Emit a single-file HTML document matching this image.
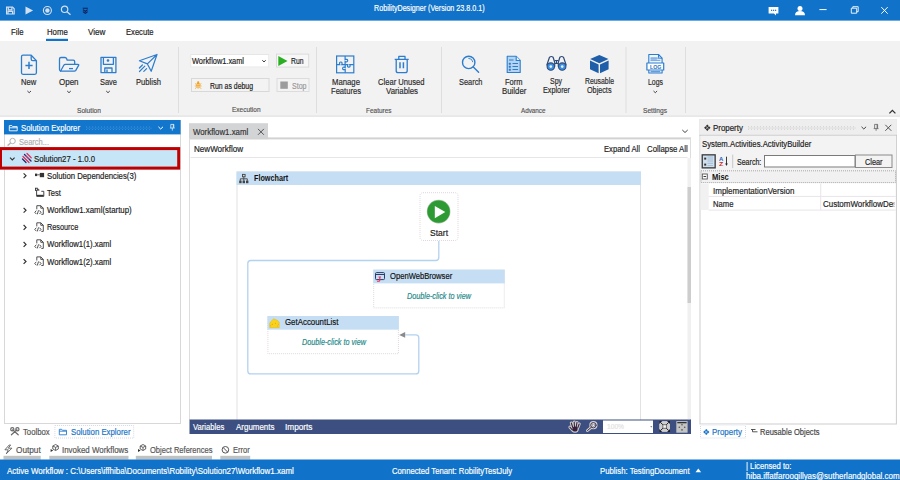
<!DOCTYPE html><html><head><meta charset="utf-8"><title>RobilityDesigner</title><style>
html,body{margin:0;padding:0;}body{width:900px;height:480px;overflow:hidden;position:relative;background:#fff;font-family:"Liberation Sans", sans-serif;}
.r{position:absolute;box-sizing:border-box;}
.t{position:absolute;white-space:nowrap;line-height:12px;height:12px;transform-origin:0 50%;-webkit-text-stroke:0.18px currentColor;}
svg{position:absolute;left:0;top:0;}
</style></head><body>
<svg width="900" height="480" viewBox="0 0 900 480">
<rect x="0" y="0" width="900" height="20.6" fill="#1072c8"/>
<rect x="46" y="38.8" width="22" height="2.2" fill="#1072c8"/>
<rect x="0" y="41" width="900" height="75.6" fill="#f2f2f3"/><rect x="0" y="115.6" width="900" height="1" fill="#dedede"/>
<rect x="178" y="47" width="1" height="66" fill="#dedede"/>
<rect x="316" y="47" width="1" height="66" fill="#dedede"/>
<rect x="441" y="47" width="1" height="66" fill="#dedede"/>
<rect x="625.5" y="47" width="1" height="66" fill="#dedede"/>
<rect x="685" y="47" width="1" height="66" fill="#dedede"/>
<rect x="190.3" y="54" width="79" height="13.5" fill="#fff"/><rect x="190.8" y="54.5" width="78" height="12.5" fill="none" stroke="#e6e6e6" stroke-width="1"/>
<rect x="276" y="53.6" width="33.2" height="14" fill="#f7f7f7"/><rect x="276.5" y="54.1" width="32.2" height="13" fill="none" stroke="#dadada" stroke-width="1"/>
<rect x="191" y="78" width="78.5" height="14" fill="#f3f3f3"/><rect x="191.5" y="78.5" width="77.5" height="13" fill="none" stroke="#d8d8d8" stroke-width="1"/>
<rect x="276.5" y="78" width="33" height="14" fill="#f3f3f3"/><rect x="277" y="78.5" width="32" height="13" fill="none" stroke="#dcdcdc" stroke-width="1"/>
<rect x="4" y="120" width="177" height="304" fill="#fff"/><rect x="4.5" y="120.5" width="176" height="303" fill="none" stroke="#d8d8d8" stroke-width="1"/>
<rect x="4" y="120" width="176.6" height="14.4" fill="#1176cc"/>
<rect x="-1" y="147.1" width="181.2" height="22.5" fill="#c6e6f7"/><rect x="0.5" y="148.6" width="178.2" height="19.5" fill="none" stroke="#c00000" stroke-width="3"/>
<rect x="54.4" y="425" width="79.8" height="13.5" fill="#fff"/><rect x="54.9" y="425.5" width="78.8" height="12.5" fill="none" stroke="#d4d9e2" stroke-width="1" stroke-dasharray="1 1"/>
<rect x="3.5" y="455.8" width="37.2" height="3.8" fill="#c0c2c2"/>
<rect x="49.3" y="455.8" width="79.2" height="3.8" fill="#c0c2c2"/>
<rect x="135.8" y="455.8" width="76.2" height="3.8" fill="#c0c2c2"/>
<rect x="220.3" y="455.8" width="29.9" height="3.8" fill="#c0c2c2"/>
<rect x="0" y="459.5" width="900" height="21" fill="#1072c8"/>
<rect x="189" y="123.2" width="79" height="16" fill="#d3d4d5"/>
<rect x="189" y="137.4" width="502" height="2" fill="#d2d2d2"/>
<rect x="189" y="138" width="1" height="282" fill="#dddddd"/>
<rect x="690" y="138" width="1" height="282" fill="#dddddd"/>
<rect x="190.5" y="157" width="497" height="1" fill="#e6e6e6"/>
<rect x="687.5" y="158" width="3.5" height="261" fill="#f0f0f0"/>
<rect x="687.5" y="187" width="3.5" height="116" fill="#cdcdcd"/>
<rect x="236.5" y="171.5" width="404.5" height="250" fill="#fff"/><rect x="237" y="172" width="403.5" height="249" fill="none" stroke="#e2e2e2" stroke-width="1"/>
<rect x="236.5" y="171.5" width="404.5" height="13.5" fill="#c6def3"/>
<rect x="419.5" y="192.2" width="39" height="48.8" fill="#fff" rx="3"/><rect x="420" y="192.7" width="38" height="47.8" fill="none" stroke="#e0d6de" stroke-width="1" stroke-dasharray="1 1" rx="3"/>
<rect x="373.2" y="269.6" width="131.6" height="38.8" fill="#fff"/><rect x="373.7" y="270.1" width="130.6" height="37.8" fill="none" stroke="#e0d8de" stroke-width="1" stroke-dasharray="1 1"/>
<rect x="373.2" y="269.6" width="131.6" height="13.8" fill="#c6def3"/>
<rect x="267.4" y="316" width="131.5" height="38.2" fill="#fff"/><rect x="267.9" y="316.5" width="130.5" height="37.2" fill="none" stroke="#e0d8de" stroke-width="1" stroke-dasharray="1 1"/>
<rect x="267.4" y="316" width="131.5" height="13.7" fill="#c6def3"/>
<rect x="189.5" y="419.5" width="501.5" height="14.5" fill="#3c4f80"/>
<rect x="603" y="420.5" width="50" height="12.5" fill="#fff"/>
<rect x="659.2" y="421.1" width="10.8" height="10.8" fill="#cfcfcf"/>
<rect x="676.3" y="421.1" width="11.3" height="11.6" fill="#c4c4c4"/>
<rect x="699.5" y="119.2" width="197.4" height="305.3" fill="#fff"/><rect x="700" y="119.7" width="196.4" height="304.3" fill="none" stroke="#cdcdcd" stroke-width="1"/><rect x="699.5" y="119.2" width="197.4" height="1" fill="#e4e4e4"/>
<rect x="699.5" y="119.2" width="197.4" height="15.8" fill="#eeeeee"/>
<rect x="699.5" y="134.8" width="197.4" height="1" fill="#c6c6c6"/>
<rect x="700.5" y="135.8" width="195.4" height="35.2" fill="#f3f3f3"/>
<rect x="701.6" y="154.2" width="14.2" height="14.3" fill="#d0dfee"/><rect x="702.25" y="154.85" width="12.9" height="13" fill="none" stroke="#3a3a3a" stroke-width="1.3"/>
<rect x="732.2" y="154.6" width="1" height="13.5" fill="#c8c8c8"/>
<rect x="764" y="155" width="91.5" height="12.5" fill="#fff"/><rect x="764.5" y="155.5" width="90.5" height="11.5" fill="none" stroke="#7a7a7a" stroke-width="1"/>
<rect x="855" y="154.5" width="37.5" height="13.5" fill="#f3f3f3"/><rect x="855.5" y="155" width="36.5" height="12.5" fill="none" stroke="#8a8a8a" stroke-width="1"/>
<rect x="700.5" y="170.3" width="195.5" height="12.8" fill="#f1f1f1"/><rect x="701" y="170.8" width="194.5" height="11.8" fill="none" stroke="#a8a8a8" stroke-width="1" stroke-dasharray="1 1"/>
<rect x="700.5" y="183.5" width="8.2" height="26.5" fill="#f1f1f1"/>
<rect x="708.7" y="195.9" width="187" height="1" fill="#e9e4e9"/>
<rect x="708.7" y="209.6" width="187" height="1" fill="#e9e4e9"/>
<rect x="820.2" y="183.5" width="1" height="26.5" fill="#e9e4e9"/>
<rect x="700" y="424.5" width="46" height="14" fill="#fff"/><rect x="700.5" y="425" width="45" height="13" fill="none" stroke="#d4d9e2" stroke-width="1" stroke-dasharray="1 1"/>
<g fill="none" stroke="#d3dfee" stroke-width="1.2"><path d="M6.6 7.2h6l1.6 1.6v5.2h-7.6z"/><path d="M8.3 7.2v2.6h3.6v-2.6M8 14v-2.6h4.6v2.6"/></g>
<path d="M25.5 6.6l7.6 3.9-7.6 3.9z" fill="#d3dfee"/>
<circle cx="47.4" cy="10.5" r="4" fill="none" stroke="#d3dfee" stroke-width="1.1"/><circle cx="47.4" cy="10.5" r="2.2" fill="#d3dfee"/>
<g fill="none" stroke="#d3dfee" stroke-width="1.2"><circle cx="64.6" cy="9.3" r="3.2"/><path d="M67 11.8l3.5 3"/></g>
<path d="M82.8 8.2h5M83 9.6l2.3 1.8 2.3-1.8M83 11.6l2.3 1.8 2.3-1.8" fill="none" stroke="#0c1d55" stroke-width="1.1"/>
<path d="M768.6 7h9.8v6.4h-2.4v2l-2-2h-5.4z" fill="#fff"/><g fill="#1072c8"><rect x="771" y="9.7" width="1.2" height="1.2"/><rect x="773" y="9.7" width="1.2" height="1.2"/><rect x="775" y="9.7" width="1.2" height="1.2"/></g>
<circle cx="800" cy="8.4" r="2.5" fill="#fff"/><path d="M795 15.2c0-3 2-4.2 5-4.2s5 1.200 5 4.200z" fill="#fff"/>
<path d="M819.4 9.6h7.200" stroke="#fff" stroke-width="1"/>
<path d="M851.300 8.200h5.400v5h-5.400zM852.800 8.200v-1.500h5.400v5h-1.500" fill="none" stroke="#fff" stroke-width="0.9"/>
<path d="M881.300 7.100l6.400 6.600M887.700 7.100l-6.400 6.600" stroke="#fff" stroke-width="1"/>
<g fill="none" stroke="#2c7dcd" stroke-width="1.3" stroke-linejoin="round"><path d="M23 55.200h8.200l5.200 5.400v12.200q0 1.500-1.500 1.500h-11.900q-1.500 0-1.500-1.500v-16.100q0-1.500 1.500-1.500z"/><path d="M31.200 55.400v3.600q0 1.600 1.600 1.600h3.400"/><path d="M29 61.800v7.200M25.400 65.400h7.200" stroke-width="1.500"/></g>
<g fill="none" stroke="#2c7dcd" stroke-width="1.300" stroke-linejoin="round"><path d="M61 71.200q-1.500-.2-1.500-1.700v-10.500q0-1.500 1.500-1.500h4q1.200 0 1.700 1.200l.5 1.500h6q1.500 0 1.500 1.500v2.600"/><path d="M60.500 71.200l3.300-6q.5-.9 1.600-.9h12.500q1.200 0 .7 1.100l-2.800 5q-.5.800-1.500.8z"/><path d="M69 68.600h4"/></g>
<g fill="none" stroke="#2c7dcd" stroke-width="1.300" stroke-linejoin="round"><path d="M101 57.300h14.900v15.300h-14.900z"/><path d="M103.400 57.300v7h10v-7"/><path d="M104.800 72.600v-4.600h7.200v4.600M107 72.600v-3"/><circle cx="108" cy="60.500" r=".7" fill="#2c7dcd"/></g>
<g fill="none" stroke="#2c7dcd" stroke-width="1.200" stroke-linejoin="round" stroke-linecap="round"><path d="M157 54.500l-17.600 6.200 8 3.200 3.800 7.400zM157 54.500l-9.600 9.400"/><path d="M142.400 65l-3 3M144.800 66.200l-5.300 5.300M146.600 68.600l-2.800 2.800"/></g>
<path d="M27.4 91l1.800 1.700 1.800-1.700" fill="none" stroke="#444" stroke-width="1"/>
<path d="M67.2 91l1.800 1.700 1.800-1.700" fill="none" stroke="#444" stroke-width="1"/>
<path d="M106.2 91l1.800 1.700 1.800-1.700" fill="none" stroke="#444" stroke-width="1"/>
<path d="M653.5 91l1.800 1.700 1.800-1.700" fill="none" stroke="#444" stroke-width="1"/>
<path d="M262.300 60.300l1.700 1.600 1.700-1.600" fill="none" stroke="#333" stroke-width="1"/>
<path d="M278.300 56l9.200 5-9.200 5z" fill="#2aae22"/>
<g fill="#f0a020"><ellipse cx="198.200" cy="85.600" rx="2.100" ry="2.900"/><circle cx="198.200" cy="82.300" r="1.100"/></g><path d="M195 83.500l1.500 1M201.400 83.500l-1.500 1M194.800 86h1.500M201.600 86h-1.500M195 88.600l1.500-1M201.400 88.600l-1.500-1" stroke="#f0a020" stroke-width=".7"/><path d="M196.500 84.700h3.400M196.300 86.300h3.800M196.700 87.800h3" stroke="#fff" stroke-width=".5"/>
<rect x="280.300" y="81.500" width="7.500" height="7.300" fill="#9c9c9c"/>
<g fill="none" stroke="#2c7dcd" stroke-width="1.200"><rect x="336.600" y="56" width="17.200" height="16.800"/><path d="M336.600 64.600h3.200q-.9-2.600 1-2.600t1 2.600h3.300v-3q2.600.9 2.600-1t-2.600-1v-3.600M345.200 64.600v2.800q-2.600-.9-2.600 1t2.600 1v3.400M345.200 64.600h2.600q-.9 2.600 1 2.600t1-2.600h4"/></g>
<g fill="none" stroke="#2c7dcd" stroke-width="1.300" stroke-linejoin="round"><path d="M394.700 59.400h14M398.800 59.400v-3h6.200v3"/><path d="M396.200 59.400v11.300q0 2 2 2h7q2 0 2-2v-11.300"/><path d="M400 62.300v6M403.400 62.300v6" stroke-width="1.500"/></g>
<g fill="none" stroke="#2c7dcd" stroke-width="1.400" stroke-linecap="round"><circle cx="468.700" cy="62.400" r="6.200"/><path d="M473.300 67l5.300 5.300"/><path d="M468.700 58.300q3.600 0 4.100 3.500" stroke-width=".9"/></g>
<g stroke="#2c7dcd" stroke-width="1.100" stroke-linejoin="round"><path d="M507.200 56.300h9l4 4.200v12h-13z" fill="#b5d4f1"/><path d="M516.200 56.300v4.200h4" fill="#e4f0fb"/><path d="M509 60h4.500M512.500 63.500h5.500M512.500 66.500h5.500M512.500 69.500h5.500" fill="none"/><path d="M509 63h1.600v1.400h-1.600zM509 66h1.600v1.400h-1.600zM509 69h1.600v1.400h-1.600z" fill="#2c7dcd" stroke-width=".5"/></g>
<g fill="none" stroke="#2d4a78" stroke-width="1.200"><path d="M549.500 57.200q1.800-1.400 3.600 0l1.600 5v4.500M563.500 57.200q-1.800-1.400-3.600 0l-1.600 5v4.500M549.500 57.200l-2.800 8.300M563.500 57.200l2.800 8.300"/><path d="M554.700 60.500h3.600M554.700 63.500h3.600M556.500 60.500v3"/></g>
<circle cx="550.800" cy="66.600" r="3.700" fill="#3b8fe2" stroke="#2d4a78" stroke-width="1.100"/><circle cx="562.200" cy="66.600" r="3.700" fill="#3b8fe2" stroke="#2d4a78" stroke-width="1.100"/><circle cx="550.800" cy="66.600" r="1.300" fill="#e8f2fc"/><circle cx="562.200" cy="66.600" r="1.300" fill="#e8f2fc"/>
<g fill="#1f5ea8"><path d="M599.300 55l9.200 4-9.200 4.200-9.200-4.200z"/><path d="M590 60.500l8.600 4v8.800l-8.600-4z"/><path d="M608.600 60.500l-8.600 4v8.800l8.600-4z"/></g>
<g stroke="#2c7dcd" stroke-width="1.100" stroke-linejoin="round"><path d="M648.800 54.500h9.700l3.600 3.700v14.800h-13.300z" fill="#f2f7fd"/><path d="M658.500 54.500v3.700h3.600" fill="none"/><path d="M650.600 57.300h6.200v3.800h-6.200z" fill="#9cc4ec" stroke="none"/><path d="M650.600 58.200h9.800M650.600 60.400h9.800" fill="none" stroke="#7fb0e4" stroke-width="1.200"/><rect x="646.900" y="63" width="16.800" height="7" fill="#fff" stroke-width="1.200"/><path d="M650.600 71.700h9.600" fill="none" stroke-width=".9"/></g>
<path d="M889.400 113.400l3-3 3 3" fill="none" stroke="#333" stroke-width="1.300"/>
<path d="M9.300 125.600h2.600l.8 1h4.500v4.200h-7.900zM9.300 127.800h7.900" fill="none" stroke="#fff" stroke-width=".9"/>
<path d="M86 127h65M86 129.400h65" stroke="#4f9add" stroke-width=".8" stroke-dasharray="1 2" fill="none"/><path d="M87.500 128.200h64" stroke="#4f9add" stroke-width=".8" stroke-dasharray="1 2" fill="none"/>
<path d="M158.400 126.800l2.300 2.200 2.300-2.200" fill="none" stroke="#fff" stroke-width="1"/>
<path d="M170.800 127.800v-3.400h3v3.400M173.300 124.400v3.400M169.900 128h4.800M172.300 128v2.600" fill="none" stroke="#fff" stroke-width=".7"/>
<g fill="none" stroke="#b4b4b4" stroke-width="1"><circle cx="12.600" cy="141" r="2.700"/><path d="M10.600 143l-3 2.600" stroke-width="1.400"/></g>
<path d="M10 157.600l2.300 2.400 2.300-2.400" fill="none" stroke="#333" stroke-width="1.100"/>
<path d="M23.600 173.29999999999998l2.400 2.400-2.400 2.400" fill="none" stroke="#333" stroke-width="1.200"/>
<path d="M23.600 207.9l2.400 2.400-2.400 2.400" fill="none" stroke="#333" stroke-width="1.200"/>
<path d="M23.600 225.0l2.400 2.400-2.400 2.400" fill="none" stroke="#333" stroke-width="1.200"/>
<path d="M23.600 242.0l2.400 2.400-2.400 2.400" fill="none" stroke="#333" stroke-width="1.200"/>
<path d="M23.600 259.1l2.400 2.400-2.400 2.400" fill="none" stroke="#333" stroke-width="1.200"/>
<g stroke-width="1.300" stroke-linecap="round"><path d="M23 156.500l6 6" stroke="#e62e5c"/><path d="M24.500 154.500l6.500 6.500" stroke="#2a2768"/><path d="M27 153.500l4.200 4.200" stroke="#e62e5c"/><path d="M22.500 159l3.500 3.500" stroke="#2a2768"/><path d="M26 156l3 3" stroke="#e62e5c" stroke-width=".8"/></g>
<rect x="35" y="173.600" width="2.200" height="2.500" fill="#333"/><path d="M37.200 174.800h2.600" stroke="#333" stroke-width=".8"/><rect x="39.800" y="172.900" width="4.300" height="4.300" fill="#333"/>
<g fill="none" stroke="#333" stroke-width=".9"><rect x="35.500" y="188.200" width="1.800" height="2.200"/><path d="M37.300 189.300h1.500v1.600M36.600 190.800v5.500h7.200v-5h-2.500"/><path d="M37 195.600h6.600" stroke-width="1.600"/></g>
<g fill="none" stroke="#333" stroke-width=".85"><path d="M36.800 209.3v-3.600h4l2.500 2.500v6.100h-2"/><path d="M40.800 205.70000000000002v2.500h2.500"/><path d="M36.300 210.60000000000002l-1.500 1.700 1.500 1.700M39.500 210.60000000000002l1.500 1.700-1.500 1.700M38.500 210.3l-1.200 4"/></g>
<g fill="none" stroke="#333" stroke-width=".85"><path d="M36.800 226.4v-3.600h4l2.500 2.500v6.100h-2"/><path d="M40.800 222.8v2.500h2.500"/><path d="M36.300 227.70000000000002l-1.500 1.700 1.500 1.700M39.500 227.70000000000002l1.500 1.700-1.500 1.700M38.500 227.4l-1.200 4"/></g>
<g fill="none" stroke="#333" stroke-width=".85"><path d="M36.800 243.4v-3.600h4l2.500 2.500v6.100h-2"/><path d="M40.800 239.8v2.500h2.500"/><path d="M36.300 244.70000000000002l-1.500 1.700 1.500 1.700M39.500 244.70000000000002l1.500 1.700-1.500 1.700M38.500 244.4l-1.200 4"/></g>
<g fill="none" stroke="#333" stroke-width=".85"><path d="M36.800 260.5v-3.600h4l2.500 2.500v6.100h-2"/><path d="M40.800 256.9v2.500h2.500"/><path d="M36.300 261.8l-1.500 1.700 1.500 1.700M39.500 261.8l1.500 1.700-1.500 1.700M38.500 261.5l-1.200 4"/></g>
<g fill="none" stroke="#6a6a6a" stroke-width="1.2" stroke-linecap="round"><path d="M12.600 429.800l5.600 5M17 429.800l-5.600 5"/><circle cx="12.300" cy="429.300" r="1.600"/><circle cx="17.400" cy="429.300" r="1.600"/></g>
<path d="M59.300 429.300h2.400l.8 1h4v4.500h-7.200zM59.300 431.200h7.200" fill="none" stroke="#2a7dd0" stroke-width=".9"/>
<path d="M9.200 445l-4.300 4.800h3.400l-2 4 5.600-5.600h-3.600l2.300-3.200z" fill="none" stroke="#555" stroke-width=".85" stroke-linejoin="round"/>
<g fill="none" stroke="#555" stroke-width=".9"><path d="M52.800000000000004 446l2.800-1.500 2.700 1.500v3l-2.700 1.500-2.800-1.500z"/><path d="M52.800000000000004 446l2.800 1.400 2.700-1.400M55.6 447.4v3"/><path d="M50.6 449l2.600 1.500-2.600 1.500z" fill="#333" stroke="none"/></g>
<g fill="none" stroke="#555" stroke-width=".9"><path d="M140.2 446l2.800-1.500 2.700 1.500v3l-2.700 1.500-2.800-1.500z"/><path d="M140.2 446l2.800 1.400 2.700-1.400M143 447.4v3"/><path d="M138 449l2.600 1.500-2.600 1.500z" fill="#333" stroke="none"/></g>
<g fill="none" stroke="#555" stroke-width="1"><circle cx="225.400" cy="449.800" r="3.300"/><path d="M223.100 447.500l4.600 4.600"/></g>
<path d="M258 128.900l5.900 5.900M263.900 128.900l-5.900 5.900" stroke="#555" stroke-width="1"/>
<path d="M682.300 130l2.700 2.500 2.700-2.500" fill="none" stroke="#444" stroke-width="1"/>
<g fill="none" stroke="#444" stroke-width=".9"><rect x="242.500" y="174.400" width="2.600" height="2.400"/><path d="M243.800 176.800v2M240.300 180.800v-2h7v2M243.800 178.800v2"/></g><g fill="#444"><rect x="239.200" y="180.600" width="2.400" height="2.600"/><rect x="242.600" y="180.600" width="2.400" height="2.600"/><rect x="246" y="180.600" width="2.400" height="2.600"/></g>
<circle cx="438.600" cy="211.600" r="11.800" fill="#9dbf9d"/><circle cx="438.600" cy="211.600" r="11.200" fill="#2e9a33"/><path d="M434.800 206l10.500 6.100-10.500 6.100z" fill="#fff"/>
<g fill="none" stroke="#b3d2f0" stroke-width="1.300"><path d="M438.800 241v16.500q0 3-3 3h-185q-3 0-3 3v107.400q0 3 3 3h165q3 0 3-3v-33q0-3-3-3h-10.500"/></g>
<path d="M399.200 334.900l6-2.800v5.600z" fill="#8a8a8a"/>
<g fill="none" stroke="#2b3c66" stroke-width="1"><rect x="375.500" y="272.600" width="9" height="7" rx="1"/><path d="M375.500 274.500h9"/></g><path d="M378.600 277h2.400M379.800 277v3.300q0 1-1 1h-1.800" fill="none" stroke="#ee2e5a" stroke-width="1.100"/>
<path d="M269.700 327.700v-4.600l3.300-3.900q.6-.5 1.300-.2l3.400 1.500 1.500 1.800v5.400z" fill="#f9d21a" stroke="#e2b100" stroke-width=".4"/><g fill="#f0882a"><circle cx="272.300" cy="324.300" r=".5"/><circle cx="275.400" cy="323.300" r=".5"/><circle cx="270.800" cy="325.700" r=".45"/><circle cx="277.500" cy="326" r=".45"/><circle cx="278.300" cy="324.600" r=".4"/></g>
<g fill="none" stroke-linecap="round"><path d="M572.8 427.5l-1.5-4.5M574.5 427l-.3-5M576.2 427.2l.8-4.800M577.7 428l1.500-4M572.3 429.800l-2.400-2.600" stroke="#cfcfcf" stroke-width="3"/><ellipse cx="575" cy="429" rx="3.800" ry="3.700" fill="#cfcfcf"/><path d="M572.8 427.5l-1.5-4.5M574.5 427l-.3-5M576.2 427.2l.8-4.800M577.7 428l1.500-4M572.3 429.800l-2.400-2.600" stroke="#3a2740" stroke-width="1.100"/><ellipse cx="575" cy="429" rx="2.600" ry="2.600" fill="#36213c"/></g>
<g fill="none" stroke-linecap="round"><circle cx="593.4" cy="425.2" r="2.7" stroke="#d2d2d2" stroke-width="2.800"/><path d="M591.3 427.3l-3.800 3.200" stroke="#d2d2d2" stroke-width="2.900"/><circle cx="593.4" cy="425.2" r="2.7" stroke="#3c2a40" stroke-width=".9"/><path d="M591.3 427.3l-3.800 3.200" stroke="#3c2a40" stroke-width="1"/><circle cx="593.4" cy="425.2" r="1" fill="#f0f0f0"/></g>
<path d="M650.300 426.300h2l-1 1.100z" fill="#555"/>
<g fill="#1e1e28"><path d="M659.2 421.1h3l-3 3zM670 421.1h-3l3 3zM659.2 431.9h3l-3-3zM670 431.9h-3l3-3z"/></g><path d="M660.5 422.4l2.500 2.500M668.700 422.400l-2.500 2.500M660.500 430.600l2.500-2.500M668.700 430.600l-2.500-2.500" stroke="#1e1e28" stroke-width="1"/><rect x="662.9" y="424.8" width="3.4" height="3.4" fill="#f4f4f4" stroke="#444" stroke-width=".7"/>
<rect x="677.300" y="422" width="9.300" height="1.300" fill="#333"/><g fill="#555"><circle cx="682" cy="424.800" r=".8"/><circle cx="679.300" cy="427.300" r=".8"/><circle cx="684.700" cy="427.300" r=".8"/><circle cx="682" cy="429.900" r=".8"/></g>
<path d="M707.30 124.60l1.45 1.45-1.45 1.45-1.45-1.45zM707.30 128.10l1.45 1.45-1.45 1.45-1.45-1.45zM705.55 126.35l1.45 1.45-1.45 1.45-1.45-1.45zM709.05 126.35l1.45 1.45-1.45 1.45-1.45-1.45z" fill="#333"/>
<path d="M748 126.800h108M748 129.200h108" stroke="#c4c4c4" stroke-width=".8" stroke-dasharray="1 2" fill="none"/><path d="M749.500 128h107" stroke="#c4c4c4" stroke-width=".8" stroke-dasharray="1 2" fill="none"/>
<path d="M861.500 126.800l2.300 2.200 2.300-2.200" fill="none" stroke="#444" stroke-width="1"/>
<path d="M874.600 128.400v-4h3v4M877.100 124.400v4M873.700 128.600h4.800M876.100 128.600v2.200" fill="none" stroke="#555" stroke-width=".7"/>
<path d="M885.300 124.800l6 6M891.300 124.800l-6 6" stroke="#555" stroke-width="1"/>
<g fill="#333"><rect x="704.200" y="157.600" width="2" height="2"/><rect x="704.200" y="163.600" width="2" height="2"/></g><path d="M707.500 157h5.500M707.500 159h5.500M707.500 161h5.500M707.500 163.300h5.500M707.500 165.500h5.500" stroke="#9ab4cf" stroke-width=".8"/>
<path d="M726.5 156.700v8.500" stroke="#222" stroke-width=".9" fill="none"/><path d="M725.100 163.600l1.400 2.100 1.400-2.100z" fill="#222"/>
<rect x="702.300" y="174" width="5" height="5" fill="#fff" stroke="#555" stroke-width=".9"/><path d="M703.500 176.500h2.600" stroke="#222" stroke-width=".9"/>
<path d="M706.30 428.90l1.4 1.4-1.4 1.4-1.4-1.4zM706.30 432.30l1.4 1.4-1.4 1.4-1.4-1.4zM704.60 430.60l1.4 1.4-1.4 1.4-1.4-1.4zM708.00 430.60l1.4 1.4-1.4 1.4-1.4-1.4z" fill="#1a73c6"/>
<path d="M751 429.500h4.500M754 431.800h3.500M752.500 429.500v2.300h1.500" fill="none" stroke="#444" stroke-width=".9"/>
<path d="M695.500 472.300l2.800-3.800 2.800 3.800z" fill="#fff"/>
</svg>
<span class="t" id="t0" style="left:374.4px;top:2.20px;font-size:8.80px;color:#fff;transform:scaleX(0.8136);">RobilityDesigner (Version 23.8.0.1)</span>
<span class="t" id="t1" style="left:11px;top:25.60px;font-size:9.02px;color:#222;transform:scaleX(0.8602);">File</span>
<span class="t" id="t2" style="left:46.7px;top:25.60px;font-size:9.02px;color:#222;transform:scaleX(0.8603);">Home</span>
<span class="t" id="t3" style="left:88px;top:25.60px;font-size:9.02px;color:#222;transform:scaleX(0.9025);">View</span>
<span class="t" id="t4" style="left:126px;top:25.60px;font-size:9.02px;color:#222;transform:scaleX(0.8441);">Execute</span>
<span class="t" id="t5" style="left:21.4px;top:76.30px;font-size:9.02px;color:#2b2b2b;transform:scaleX(0.8478);">New</span>
<span class="t" id="t6" style="left:59px;top:76.00px;font-size:9.02px;color:#2b2b2b;transform:scaleX(0.8839);">Open</span>
<span class="t" id="t7" style="left:99.5px;top:76.00px;font-size:9.02px;color:#2b2b2b;transform:scaleX(0.8267);">Save</span>
<span class="t" id="t8" style="left:135.5px;top:76.00px;font-size:9.02px;color:#2b2b2b;transform:scaleX(0.8452);">Publish</span>
<span class="t" id="t9" style="left:76.5px;top:105.00px;font-size:7.48px;color:#555;transform:scaleX(0.8889);">Solution</span>
<span class="t" id="t10" style="left:232px;top:104.00px;font-size:7.48px;color:#555;transform:scaleX(0.8686);">Execution</span>
<span class="t" id="t11" style="left:365.5px;top:105.00px;font-size:7.48px;color:#555;transform:scaleX(0.8649);">Features</span>
<span class="t" id="t12" style="left:521px;top:105.00px;font-size:7.48px;color:#555;transform:scaleX(0.8426);">Advance</span>
<span class="t" id="t13" style="left:642.5px;top:105.00px;font-size:7.48px;color:#555;transform:scaleX(0.8889);">Settings</span>
<span class="t" id="t14" style="left:192px;top:55.00px;font-size:8.36px;color:#222;transform:scaleX(0.8853);">Workflow1.xaml</span>
<span class="t" id="t15" style="left:291px;top:55.00px;font-size:8.36px;color:#222;transform:scaleX(0.8163);">Run</span>
<span class="t" id="t16" style="left:210px;top:79.50px;font-size:8.36px;color:#222;transform:scaleX(0.8274);">Run as debug</span>
<span class="t" id="t17" style="left:292px;top:79.50px;font-size:8.36px;color:#9a9a9a;transform:scaleX(0.8444);">Stop</span>
<span class="t" id="t18" style="left:331.5px;top:76.00px;font-size:9.02px;color:#2b2b2b;transform:scaleX(0.8591);">Manage</span>
<span class="t" id="t19" style="left:330.5px;top:85.00px;font-size:9.02px;color:#2b2b2b;transform:scaleX(0.8428);">Features</span>
<span class="t" id="t20" style="left:378px;top:76.00px;font-size:9.02px;color:#2b2b2b;transform:scaleX(0.8435);">Clear Unused</span>
<span class="t" id="t21" style="left:385.5px;top:85.00px;font-size:9.02px;color:#2b2b2b;transform:scaleX(0.8667);">Variables</span>
<span class="t" id="t22" style="left:458.5px;top:76.00px;font-size:9.02px;color:#2b2b2b;transform:scaleX(0.8223);">Search</span>
<span class="t" id="t23" style="left:504.5px;top:76.00px;font-size:9.02px;color:#2b2b2b;transform:scaleX(0.8315);">Form</span>
<span class="t" id="t24" style="left:501.5px;top:85.00px;font-size:9.02px;color:#2b2b2b;transform:scaleX(0.8726);">Builder</span>
<span class="t" id="t25" style="left:550px;top:75.00px;font-size:9.02px;color:#2b2b2b;transform:scaleX(0.7719);">Spy</span>
<span class="t" id="t26" style="left:542.5px;top:84.00px;font-size:9.02px;color:#2b2b2b;transform:scaleX(0.8041);">Explorer</span>
<span class="t" id="t27" style="left:584.5px;top:75.00px;font-size:9.02px;color:#2b2b2b;transform:scaleX(0.7613);">Reusable</span>
<span class="t" id="t28" style="left:587px;top:84.00px;font-size:9.02px;color:#2b2b2b;transform:scaleX(0.8012);">Objects</span>
<span class="t" id="t29" style="left:647.5px;top:76.00px;font-size:9.02px;color:#2b2b2b;transform:scaleX(0.7668);">Logs</span>
<span class="t" id="t30" style="left:21px;top:121.80px;font-size:9.02px;color:#fff;transform:scaleX(0.8594);">Solution Explorer</span>
<span class="t" id="t31" style="left:19px;top:136.00px;font-size:9.02px;color:#adadad;transform:scaleX(0.8312);">Search...</span>
<span class="t" id="t32" style="left:34px;top:152.50px;font-size:9.02px;color:#222;transform:scaleX(0.8630);">Solution27 - 1.0.0</span>
<span class="t" id="t33" style="left:46.7px;top:169.70px;font-size:8.80px;color:#222;transform:scaleX(0.8821);">Solution Dependencies(3)</span>
<span class="t" id="t34" style="left:46.7px;top:186.80px;font-size:8.80px;color:#222;transform:scaleX(0.8550);">Test</span>
<span class="t" id="t35" style="left:47px;top:204.30px;font-size:8.80px;color:#222;transform:scaleX(0.8947);">Workflow1.xaml(startup)</span>
<span class="t" id="t36" style="left:47px;top:221.40px;font-size:8.80px;color:#222;transform:scaleX(0.8285);">Resource</span>
<span class="t" id="t37" style="left:47px;top:238.40px;font-size:8.80px;color:#222;transform:scaleX(0.8848);">Workflow1(1).xaml</span>
<span class="t" id="t38" style="left:47px;top:255.50px;font-size:8.80px;color:#222;transform:scaleX(0.8848);">Workflow1(2).xaml</span>
<span class="t" id="t39" style="left:22.8px;top:426.00px;font-size:9.02px;color:#555;transform:scaleX(0.8591);">Toolbox</span>
<span class="t" id="t40" style="left:71px;top:426.00px;font-size:9.02px;color:#1a73c6;transform:scaleX(0.8666);">Solution Explorer</span>
<span class="t" id="t41" style="left:16px;top:443.60px;font-size:9.02px;color:#555;transform:scaleX(0.9122);">Output</span>
<span class="t" id="t42" style="left:62.2px;top:443.60px;font-size:9.02px;color:#555;transform:scaleX(0.8781);">Invoked Workflows</span>
<span class="t" id="t43" style="left:149.5px;top:443.60px;font-size:9.02px;color:#555;transform:scaleX(0.8370);">Object References</span>
<span class="t" id="t44" style="left:233.3px;top:443.60px;font-size:9.02px;color:#555;transform:scaleX(0.8330);">Error</span>
<span class="t" id="t45" style="left:6.7px;top:464.70px;font-size:9.02px;color:#fff;transform:scaleX(0.8847);">Active Workflow : C:\Users\iffhiba\Documents\Robility\Solution27\Workflow1.xaml</span>
<span class="t" id="t46" style="left:392px;top:464.70px;font-size:9.02px;color:#fff;transform:scaleX(0.8562);">Connected Tenant: RobilityTestJuly</span>
<span class="t" id="t47" style="left:600.4px;top:464.70px;font-size:9.02px;color:#fff;transform:scaleX(0.8609);">Publish: TestingDocument</span>
<span class="t" id="t48" style="left:745.5px;top:459.50px;font-size:9.02px;color:#fff;transform:scaleX(0.8510);">| Licensed to:</span>
<span class="t" id="t49" style="left:745.5px;top:469.50px;font-size:9.02px;color:#fff;transform:scaleX(0.8803);">hiba.iffatfarooqillyas@sutherlandglobal.com</span>
<span class="t" id="t50" style="left:193.3px;top:125.50px;font-size:9.02px;color:#333;transform:scaleX(0.8697);">Workflow1.xaml</span>
<span class="t" id="t51" style="left:193.8px;top:143.40px;font-size:9.02px;color:#222;transform:scaleX(0.8953);">NewWorkflow</span>
<span class="t" id="t52" style="left:604px;top:143.40px;font-size:9.02px;color:#222;transform:scaleX(0.8449);">Expand All</span>
<span class="t" id="t53" style="left:646.7px;top:143.40px;font-size:9.02px;color:#222;transform:scaleX(0.8661);">Collapse All</span>
<span class="t" id="t54" style="left:253.8px;top:172.00px;font-size:9.02px;color:#111;font-weight:700;-webkit-text-stroke:0;transform:scaleX(0.8032);">Flowchart</span>
<span class="t" id="t55" style="left:430px;top:227.40px;font-size:8.80px;color:#222;transform:scaleX(0.9689);">Start</span>
<span class="t" id="t56" style="left:390.4px;top:270.40px;font-size:9.02px;color:#111;transform:scaleX(0.8463);">OpenWebBrowser</span>
<span class="t" id="t57" style="left:407px;top:290.00px;font-size:8.58px;color:#1f8a8a;font-style:italic;transform:scaleX(0.8442);">Double-click to view</span>
<span class="t" id="t58" style="left:284.8px;top:316.10px;font-size:9.02px;color:#111;transform:scaleX(0.8734);">GetAccountList</span>
<span class="t" id="t59" style="left:302px;top:336.40px;font-size:8.58px;color:#1f8a8a;font-style:italic;transform:scaleX(0.8442);">Double-click to view</span>
<span class="t" id="t60" style="left:193.3px;top:420.80px;font-size:9.02px;color:#fff;transform:scaleX(0.8450);">Variables</span>
<span class="t" id="t61" style="left:235.5px;top:420.80px;font-size:9.02px;color:#fff;transform:scaleX(0.8828);">Arguments</span>
<span class="t" id="t62" style="left:285px;top:420.80px;font-size:9.02px;color:#fff;transform:scaleX(0.9148);">Imports</span>
<span class="t" id="t63" style="left:712.6px;top:121.80px;font-size:9.02px;color:#222;transform:scaleX(0.8774);">Property</span>
<span class="t" id="t64" style="left:701.7px;top:138.20px;font-size:9.02px;color:#222;transform:scaleX(0.8588);">System.Activities.ActivityBuilder</span>
<span class="t" id="t65" style="left:736.7px;top:156.40px;font-size:9.02px;color:#222;transform:scaleX(0.7819);">Search:</span>
<span class="t" id="t66" style="left:865.3px;top:156.20px;font-size:9.02px;color:#222;transform:scaleX(0.8122);">Clear</span>
<span class="t" id="t67" style="left:711.7px;top:171.30px;font-size:9.02px;color:#111;font-weight:700;-webkit-text-stroke:0;transform:scaleX(0.8380);">Misc</span>
<span class="t" id="t68" style="left:712.6px;top:185.20px;font-size:9.02px;color:#222;transform:scaleX(0.8875);">ImplementationVersion</span>
<span class="t" id="t69" style="left:712.6px;top:198.00px;font-size:9.02px;color:#222;transform:scaleX(0.8478);">Name</span>
<span class="t" id="t70" style="left:823px;top:197.90px;font-size:9.02px;color:#222;transform:scaleX(0.8833);clip-path:inset(0 3.28px 0 0);">CustomWorkflowDes</span>
<span class="t" id="t71" style="left:712px;top:426.00px;font-size:9.02px;color:#1a73c6;transform:scaleX(0.8803);">Property</span>
<span class="t" id="t72" style="left:759.5px;top:426.00px;font-size:9.02px;color:#444;transform:scaleX(0.8360);">Reusable Objects</span>
<span class="t" id="t73" style="left:649.6px;top:60.60px;font-size:6.16px;color:#2a6fc0;font-weight:700;-webkit-text-stroke:0;transform:scaleX(0.8543);">LOG</span>
<span class="t" id="t74" style="left:607px;top:421.00px;font-size:7.70px;color:#e2e2e2;transform:scaleX(0.8642);">100%</span>
<span class="t" id="t75" style="left:718.7px;top:152.60px;font-size:6.16px;color:#2060c0;font-weight:700;-webkit-text-stroke:0;transform:scaleX(0.9656);">A</span>
<span class="t" id="t76" style="left:718.7px;top:157.80px;font-size:6.16px;color:#c03030;font-weight:700;-webkit-text-stroke:0;transform:scaleX(1.1419);">Z</span>
</body></html>
